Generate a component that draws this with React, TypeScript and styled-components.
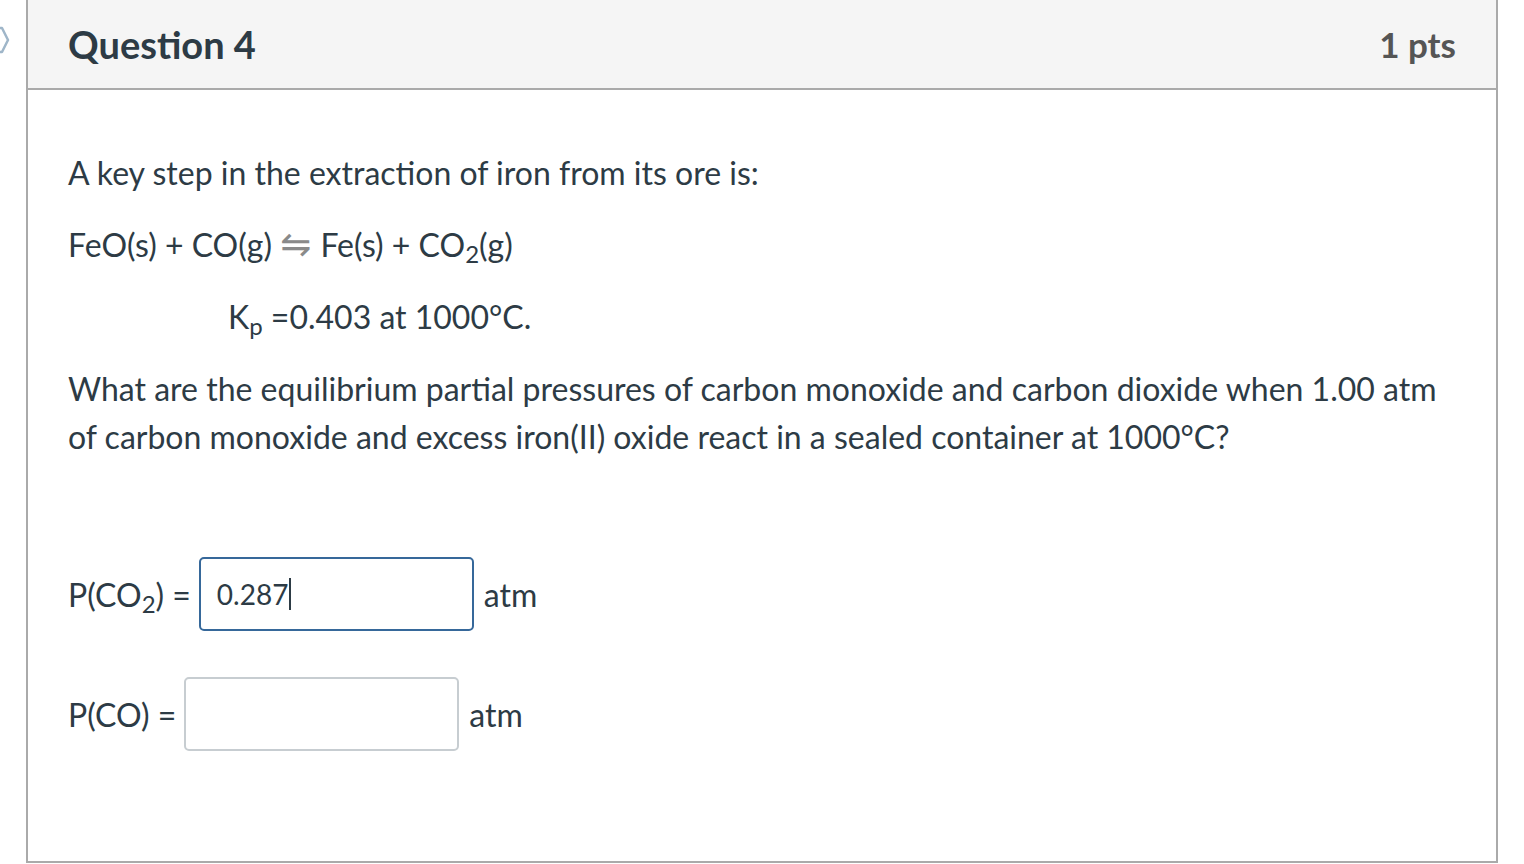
import React from 'react';
import styled, { createGlobalStyle } from 'styled-components';

const GlobalStyle = createGlobalStyle`
    html, body {
        margin: 0;
        padding: 0;
        background: #ffffff;
    }
    body {
        font-family: Lato, 'Liberation Sans', sans-serif;
        color: #2d3b45;
    }
`;

const Page = styled.div`
    display: flex;
    align-items: flex-start;
    width: 1498px;
`;

const Gutter = styled.div`
    width: 26px;
    flex: none;
    padding-top: 26px;
`;

const Card = styled.section`
    width: 1472px;
    box-sizing: border-box;
    border: 2px solid #aaaaaa;
    border-top: none;
`;

const Header = styled.header`
    display: flex;
    align-items: center;
    justify-content: space-between;
    height: 88px;
    padding: 0 40px;
    background: #f5f5f5;
    border-bottom: 2px solid #aaaaaa;
`;

const Title = styled.h2`
    margin: 0;
    font-size: 38px;
    font-weight: 700;
    color: #2d3b45;
`;

const Points = styled.div`
    font-size: 35px;
    font-weight: 700;
    color: #555555;
`;

const Body = styled.div`
    padding: 59px 40px 110px;
`;

const Para = styled.p<{ $indent?: number }>`
    margin: 0 0 24px;
    padding-left: ${(p) => p.$indent ?? 0}px;
    font-size: 32px;
    line-height: 48px;
`;

const Sub = styled.sub`
    font-size: 0.75em;
    line-height: 0;
    vertical-align: -0.25em;
`;

const Harpoons = styled.span`
    display: inline-block;
    font-family: 'DejaVu Sans', sans-serif;
    font-size: 37px;
    line-height: 1;
    color: #8a8a8a;
    margin: 0 1px 0 0;
`;

const Answers = styled.div`
    display: flex;
    flex-direction: column;
    gap: 46px;
    margin-top: 96px;
`;

const Row = styled.div`
    display: flex;
    align-items: center;
    font-size: 32px;
`;

const Label = styled.span`
    margin-right: 8px;
`;

const Field = styled.div<{ $focused?: boolean }>`
    display: flex;
    align-items: center;
    width: 275px;
    height: 74px;
    box-sizing: border-box;
    padding: 0 16px;
    border: 2px solid ${(p) => (p.$focused ? '#36689a' : '#c7cdd1')};
    border-radius: 5px;
    background: #ffffff;
    font-size: 28px;
    color: #2d3b45;
`;

const Caret = styled.span`
    display: inline-block;
    width: 2px;
    height: 32px;
    margin-left: 1px;
    background: #2d3b45;
`;

const Unit = styled.span`
    margin-left: 10px;
`;

const FlagIcon = () => (
    <svg width="26" height="30" viewBox="0 0 26 30" aria-hidden="true">
        <polyline
            points="-4,2 2,2 8,14 2,26 -4,26"
            fill="none"
            stroke="#9fb6c9"
            strokeWidth="2.5"
            strokeLinejoin="round"
        />
    </svg>
);

const App = (): React.ReactElement => {
    return (
        <Page>
            <GlobalStyle />
            <Gutter>
                <FlagIcon />
            </Gutter>
            <Card>
                <Header>
                    <Title>Question 4</Title>
                    <Points>1 pts</Points>
                </Header>
                <Body>
                    <Para>A key step in the extraction of iron from its ore is:</Para>
                    <Para>
                        FeO(s) + CO(g) <Harpoons>⇋</Harpoons> Fe(s) + CO<Sub>2</Sub>(g)
                    </Para>
                    <Para $indent={160}>
                        K<Sub>p</Sub> =0.403 at 1000°C.
                    </Para>
                    <Para>
                        What are the equilibrium partial pressures of carbon monoxide and carbon dioxide when 1.00 atm
                        of carbon monoxide and excess iron(II) oxide react in a sealed container at 1000°C?
                    </Para>
                    <Answers>
                        <Row>
                            <Label>
                                P(CO<Sub>2</Sub>) =
                            </Label>
                            <Field $focused>
                                0.287
                                <Caret />
                            </Field>
                            <Unit>atm</Unit>
                        </Row>
                        <Row>
                            <Label>P(CO) =</Label>
                            <Field />
                            <Unit>atm</Unit>
                        </Row>
                    </Answers>
                </Body>
            </Card>
        </Page>
    );
};

export default App;
